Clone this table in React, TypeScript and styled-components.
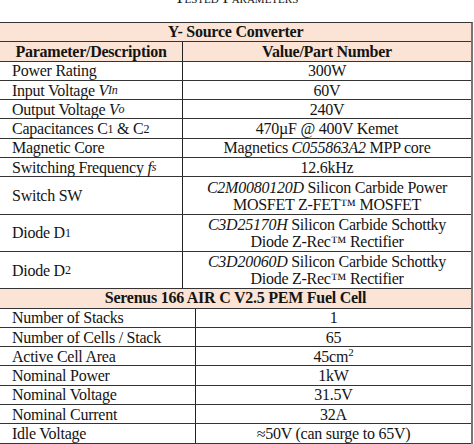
import React from 'react';
import styled, { createGlobalStyle, css } from 'styled-components';

const GlobalStyle = createGlobalStyle`
  body {
    margin: 0;
    background: #fff;
    color: #141414;
    font-family: "Liberation Serif", "Times New Roman", serif;
  }
`;

const PEACH = '#fbe4d5';
const LINE = '#343434';

const Page = styled.div`
  width: 474px;
  height: 444px;
  overflow: hidden;
`;

const Caption = styled.div`
  width: 473px;
  margin: -10px 0 16px;
  font-size: 16px;
  line-height: 16px;
  font-variant: small-caps;
  text-align: center;
`;

const Table = styled.div`
  width: 473px;
  box-sizing: border-box;
  border-top: 1px solid ${LINE};
  border-right: 2px solid #767676;
  font-size: 16px;
  letter-spacing: -0.25px;
`;

const Section = styled.div`
  height: 19.3px;
  box-sizing: border-box;
  border-bottom: 1px solid ${LINE};
  background: ${PEACH};
  font-weight: bold;
  line-height: 18px;
  text-align: center;
`;

const Row = styled.div<{ $split: number; $tall?: boolean; $head?: boolean }>`
  display: grid;
  grid-template-columns: ${(p) => p.$split}px 1fr;
  height: ${(p) => (p.$tall ? 37.3 : 19.3)}px;
  box-sizing: border-box;
  border-bottom: 1px solid ${LINE};
  line-height: 17px;
  ${(p) =>
    p.$head &&
    css`
      background: ${PEACH};
      font-weight: bold;
    `}
`;

const Label = styled.div<{ $center?: boolean }>`
  display: flex;
  align-items: center;
  justify-content: ${(p) => (p.$center ? 'center' : 'flex-start')};
  padding-left: ${(p) => (p.$center ? 0 : 12)}px;
  border-right: 1px solid #222;
  white-space: nowrap;
`;

const Value = styled.div`
  display: flex;
  flex-direction: column;
  justify-content: center;
  align-items: center;
  text-align: center;
  white-space: nowrap;
`;

const Sub = styled.sub`
  font-size: 12px;
  line-height: 0;
  vertical-align: -3px;
`;

const Sup = styled.sup`
  font-size: 11px;
  line-height: 0;
  vertical-align: 6px;
`;

type Item = { label: React.ReactNode; value: React.ReactNode; tall?: boolean };

const converter: Item[] = [
  { label: 'Power Rating', value: '300W' },
  {
    label: (
      <>
        Input Voltage&nbsp;<i>V</i>
        <Sub>
          <i>In</i>
        </Sub>
      </>
    ),
    value: '60V',
  },
  {
    label: (
      <>
        Output Voltage&nbsp;<i>V</i>
        <Sub>
          <i>o</i>
        </Sub>
      </>
    ),
    value: '240V',
  },
  {
    label: (
      <>
        Capacitances C<Sub>1</Sub>&nbsp;&amp; C<Sub>2</Sub>
      </>
    ),
    value: '470µF @ 400V Kemet',
  },
  {
    label: 'Magnetic Core',
    value: (
      <span>
        Magnetics <i>C055863A2</i> MPP core
      </span>
    ),
  },
  {
    label: (
      <>
        Switching Frequency&nbsp;<i>f</i>
        <Sub>
          <i>s</i>
        </Sub>
      </>
    ),
    value: '12.6kHz',
  },
  {
    label: 'Switch SW',
    tall: true,
    value: (
      <>
        <span>
          <i>C2M0080120D</i> Silicon Carbide Power
        </span>
        <span>MOSFET Z-FET™ MOSFET</span>
      </>
    ),
  },
  {
    label: (
      <>
        Diode D<Sub>1</Sub>
      </>
    ),
    tall: true,
    value: (
      <>
        <span>
          <i>C3D25170H</i> Silicon Carbide Schottky
        </span>
        <span>Diode Z-Rec™ Rectifier</span>
      </>
    ),
  },
  {
    label: (
      <>
        Diode D<Sub>2</Sub>
      </>
    ),
    tall: true,
    value: (
      <>
        <span>
          <i>C3D20060D</i> Silicon Carbide Schottky
        </span>
        <span>Diode Z-Rec™ Rectifier</span>
      </>
    ),
  },
];

const fuelCell: Item[] = [
  { label: 'Number of Stacks', value: '1' },
  { label: 'Number of Cells / Stack', value: '65' },
  {
    label: 'Active Cell Area',
    value: (
      <span>
        45cm<Sup>2</Sup>
      </span>
    ),
  },
  { label: 'Nominal Power', value: '1kW' },
  { label: 'Nominal Voltage', value: '31.5V' },
  { label: 'Nominal Current', value: '32A' },
  { label: 'Idle Voltage', value: '≈50V (can surge to 65V)' },
];

const Rows = ({ items, split }: { items: Item[]; split: number }) => (
  <>
    {items.map((item, i) => (
      <Row key={i} $split={split} $tall={item.tall}>
        <Label>{item.label}</Label>
        <Value>{item.value}</Value>
      </Row>
    ))}
  </>
);

const App = (): React.ReactElement => (
  <Page>
    <GlobalStyle />
    <Caption>Tested Parameters</Caption>
    <Table>
      <Section>Y- Source Converter</Section>
      <Row $split={183} $head>
        <Label $center>Parameter/Description</Label>
        <Value>Value/Part Number</Value>
      </Row>
      <Rows items={converter} split={183} />
      <Section>Serenus 166 AIR C V2.5 PEM Fuel Cell</Section>
      <Rows items={fuelCell} split={196} />
    </Table>
  </Page>
);

export default App;
